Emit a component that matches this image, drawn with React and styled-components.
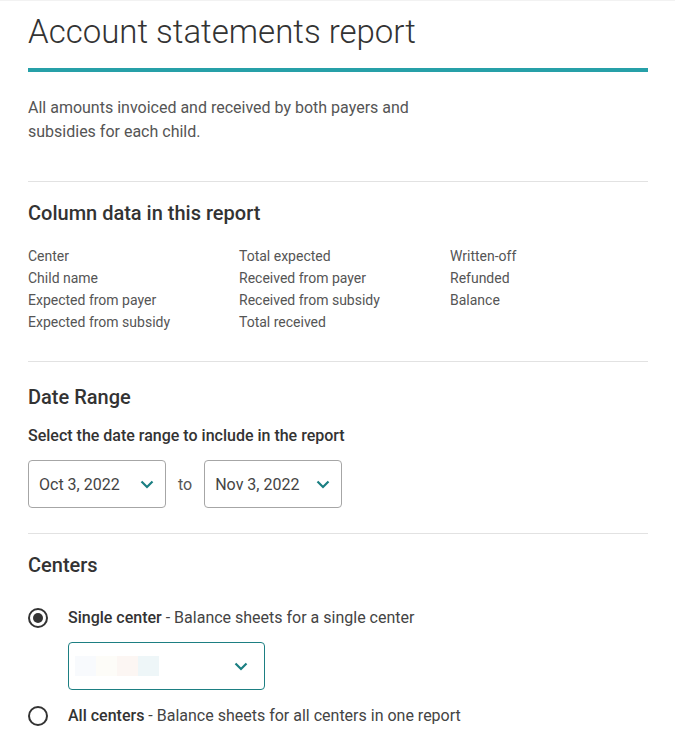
import React from 'react'
import styled, { createGlobalStyle } from 'styled-components';

const GlobalStyle = createGlobalStyle`
  body {
    margin: 0;
    background: #fff;
    font-family: Roboto, "Liberation Sans", Arial, sans-serif;
    color: #3a3a3a;
  }
`;

const Page = styled.div`
  border-top: 1px solid #f2f2f2;
  padding: 0 27px 0 28px;
  width: 620px;
`;

const Title = styled.h1`
  margin: 0;
  padding-top: 11px;
  font-size: 33px;
  font-weight: 300;
  line-height: 40px;
  color: #333;
  padding-bottom: 16px;
  border-bottom: 4px solid #26a0a8;
`;

const Intro = styled.p`
  margin: 0;
  padding: 24px 0 37px;
  max-width: 400px;
  font-size: 16px;
  line-height: 24px;
  color: #555;
`;

const Section = styled.section`
  border-top: 1px solid #e2e2e2;
  padding: ${p => p.$pad || '20px 0 24px'};
`;

const Heading = styled.h2`
  margin: 0 0 ${p => p.$gap || '20px'};
  font-size: 20px;
  font-weight: 500;
  line-height: 24px;
  color: #333;
`;

const Columns = styled.div`
  display: grid;
  grid-template-columns: 211px 211px 1fr;
  grid-auto-flow: column;
  grid-template-rows: repeat(4, 22px);
  font-size: 14px;
  color: #555;
  line-height: 22px;
`;

const Label = styled.div`
  font-size: 16px;
  font-weight: 500;
  color: #333;
  line-height: 22px;
  margin-bottom: 13px;
`;

const DateRow = styled.div`
  display: flex;
  align-items: center;
  gap: 12px;
`;

const DateSelect = styled.div`
  width: 138px;
  height: 48px;
  box-sizing: border-box;
  border: 1px solid #a6a6a6;
  border-radius: 4px;
  display: flex;
  align-items: center;
  justify-content: space-between;
  padding: 0 11px 0 10px;
  font-size: 16px;
  color: #444;
`;

const To = styled.span`
  font-size: 16px;
  color: #555;
`;

const Option = styled.label`
  display: flex;
  align-items: center;
  gap: 20px;
  font-size: 16px;
  color: #444;
  line-height: 22px;
`;

const Radio = styled.span`
  width: 20px;
  height: 20px;
  box-sizing: border-box;
  border: 2px solid #333;
  border-radius: 50%;
  display: flex;
  align-items: center;
  justify-content: center;
  &::after {
    content: '';
    width: 10px;
    height: 10px;
    border-radius: 50%;
    background: ${p => (p.$checked ? '#333' : 'transparent')};
  }
`;

const Strong = styled.b`
  font-weight: 500;
  color: #333;
`;

const CenterSelect = styled.div`
  margin: 13px 0 15px 40px;
  width: 197px;
  height: 48px;
  box-sizing: border-box;
  border: 1px solid #1d7f82;
  border-radius: 4px;
  display: flex;
  align-items: center;
  justify-content: space-between;
  padding: 0 16px 0 6px;
`;

const Blur = styled.div`
  display: flex;
  span {
    width: 21px;
    height: 20px;
  }
`;

function Chevron() {
  return (
    <svg width="14" height="9" viewBox="0 0 14 9">
      <path d="M1.5 1.5 L7 7 L12.5 1.5" fill="none" stroke="#1a7f82" strokeWidth="2.2" />
    </svg>
  );
}

const columns = [
  'Center', 'Child name', 'Expected from payer', 'Expected from subsidy',
  'Total expected', 'Received from payer', 'Received from subsidy', 'Total received',
  'Written-off', 'Refunded', 'Balance',
];

export default function App() {
  return (
    <>
      <GlobalStyle />
      <Page>
        <Title>Account statements report</Title>
        <Intro>All amounts invoiced and received by both payers and subsidies for each child.</Intro>
        <Section $pad="19px 0 28px">
          <Heading $gap="20px">Column data in this report</Heading>
          <Columns>
            {columns.map(c => <div key={c}>{c}</div>)}
          </Columns>
        </Section>
        <Section $pad="23px 0 25px">
          <Heading $gap="16px">Date Range</Heading>
          <Label>Select the date range to include in the report</Label>
          <DateRow>
            <DateSelect>Oct 3, 2022 <Chevron /></DateSelect>
            <To>to</To>
            <DateSelect>Nov 3, 2022 <Chevron /></DateSelect>
          </DateRow>
        </Section>
        <Section $pad="19px 0 20px">
          <Heading $gap="30px">Centers</Heading>
          <Option>
            <Radio $checked />
            <span><Strong>Single center</Strong> - Balance sheets for a single center</span>
          </Option>
          <CenterSelect>
            <Blur>
              <span style={{ background: '#f8fafd' }} />
              <span style={{ background: '#fdfcf8' }} />
              <span style={{ background: '#fcf6f3' }} />
              <span style={{ background: '#eef6f8' }} />
            </Blur>
            <Chevron />
          </CenterSelect>
          <Option>
            <Radio />
            <span><Strong>All centers</Strong> - Balance sheets for all centers in one report</span>
          </Option>
        </Section>
      </Page>
    </>
  );
}
